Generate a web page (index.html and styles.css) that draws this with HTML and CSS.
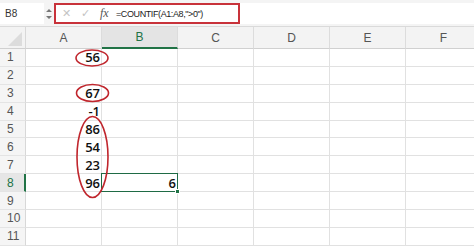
FILE: index.html
```html
<!DOCTYPE html>
<html lang="en">
<head>
  <meta charset="UTF-8" />
  <title>COUNTIF</title>
  <link rel="stylesheet" href="styles.css">
</head>
<body>
  <div class="app">
    <div class="formula-bar">
      <div class="name-box">B8</div>
      <div class="spinner">
        <svg width="6" height="12" viewBox="0 0 6 12"><path d="M0 4 L3 1 L6 4 Z M0 8 L3 11 L6 8 Z" fill="#777"/></svg>
      </div>
      <div class="formula-field">
        <div class="highlight">
          <span class="fx-btn cancel">&#x2715;</span>
          <span class="fx-btn ok">&#x2713;</span>
          <span class="fx">fx</span>
          <span class="formula">=COUNTIF(A1:A8,"&gt;0")</span>
        </div>
      </div>
    </div>

    <div class="sheet">
      <div class="corner"><svg width="26" height="22" viewBox="0 0 26 22"><path d="M22 5 L22 19 L8 19 Z" fill="#dcdcdc"/></svg></div>
      <div class="col-head">A</div>
      <div class="col-head active">B</div>
      <div class="col-head">C</div>
      <div class="col-head">D</div>
      <div class="col-head">E</div>
      <div class="col-head">F</div>

      <div class="row-head">1</div><div class="cell num">56</div><div class="cell"></div><div class="cell"></div><div class="cell"></div><div class="cell"></div><div class="cell"></div>
      <div class="row-head">2</div><div class="cell"></div><div class="cell"></div><div class="cell"></div><div class="cell"></div><div class="cell"></div><div class="cell"></div>
      <div class="row-head">3</div><div class="cell num">67</div><div class="cell"></div><div class="cell"></div><div class="cell"></div><div class="cell"></div><div class="cell"></div>
      <div class="row-head">4</div><div class="cell num">-1</div><div class="cell"></div><div class="cell"></div><div class="cell"></div><div class="cell"></div><div class="cell"></div>
      <div class="row-head">5</div><div class="cell num">86</div><div class="cell"></div><div class="cell"></div><div class="cell"></div><div class="cell"></div><div class="cell"></div>
      <div class="row-head">6</div><div class="cell num">54</div><div class="cell"></div><div class="cell"></div><div class="cell"></div><div class="cell"></div><div class="cell"></div>
      <div class="row-head">7</div><div class="cell num">23</div><div class="cell"></div><div class="cell"></div><div class="cell"></div><div class="cell"></div><div class="cell"></div>
      <div class="row-head active">8</div><div class="cell num">96</div><div class="cell num selected">6<span class="handle"></span></div><div class="cell"></div><div class="cell"></div><div class="cell"></div><div class="cell"></div>
      <div class="row-head">9</div><div class="cell"></div><div class="cell"></div><div class="cell"></div><div class="cell"></div><div class="cell"></div><div class="cell"></div>
      <div class="row-head">10</div><div class="cell"></div><div class="cell"></div><div class="cell"></div><div class="cell"></div><div class="cell"></div><div class="cell"></div>
      <div class="row-head">11</div><div class="cell"></div><div class="cell"></div><div class="cell"></div><div class="cell"></div><div class="cell"></div><div class="cell"></div>

      <!-- красные пометки поверх таблицы -->
      <svg class="marks" width="474" height="226" viewBox="0 0 474 226">
        <ellipse cx="92" cy="9" rx="16" ry="8" />
        <ellipse cx="92.5" cy="44" rx="16" ry="8.5" />
        <ellipse cx="92.5" cy="108" rx="15.5" ry="40.5" />
      </svg>
    </div>
  </div>
</body>
</html>
```

FILE: styles.css
```css
* {
  box-sizing: border-box;
}
body {
  margin: 0;
  background: #fff;
  font-family: "Liberation Sans", Arial, sans-serif;
  color: #222;
}
.app {
  width: 474px;
  height: 248px;
  overflow: hidden;
}
.formula-bar {
  display: flex;
  align-items: center;
  height: 27px;
  background: #f4f4f4;
  padding: 3px 0 2px 0;
  border-bottom: 1px solid #dadada;
}
.name-box {
  width: 44px;
  height: 100%;
  background: #fff;
  font-size: 10px;
  padding: 5px 0 0 5px;
  color: #333;
}
.spinner {
  width: 9px;
  display: flex;
  justify-content: center;
}
.formula-field {
  flex: 1;
  height: 100%;
  margin-left: 1px;
  background: #fff;
}
.highlight {
  width: 186px;
  height: 21px;
  border: 2px solid #c8323a;
  display: flex;
  align-items: center;
  padding-left: 6px;
  font-size: 10px;
}
.fx-btn {
  color: #c4c4c4;
  font-size: 11px;
  width: 19px;
}
.fx {
  font-family: "Liberation Serif", serif;
  font-style: italic;
  font-size: 12px;
  color: #555;
  width: 16px;
}
.formula {
  color: #222;
  font-size: 9px;
  letter-spacing: -0.4px;
}
.sheet {
  position: relative;
  display: grid;
  grid-template-columns: 26px repeat(6, 76px);
  grid-template-rows: 22px repeat(11, 17.9px);
}
.corner {
  background: #f3f3f3;
  border-right: 1px solid #d8d8d8;
  border-bottom: 1px solid #d0d0d0;
}
.col-head {
  background: #f3f3f3;
  border-right: 1px solid #dcdcdc;
  border-bottom: 1px solid #d0d0d0;
  display: flex;
  align-items: center;
  justify-content: center;
  font-size: 12px;
  color: #555;
}
.col-head.active {
  background: #e4e4e4;
  color: #217346;
  border-bottom: 2px solid #217346;
}
.row-head {
  background: #f5f5f5;
  border-right: 1px solid #d8d8d8;
  border-bottom: 1px solid #e4e4e4;
  display: flex;
  align-items: center;
  padding-left: 7px;
  font-size: 12px;
  color: #555;
}
.row-head.active {
  color: #217346;
  background: #e6e6e6;
  border-right: 2px solid #217346;
}
.cell {
  border-right: 1px solid #e1e1e1;
  border-bottom: 1px solid #e1e1e1;
  font-family: "Open Sans", sans-serif;
  font-size: 13px;
  font-weight: 600;
  display: flex;
  align-items: center;
  justify-content: flex-end;
  padding-right: 1px;
  color: #111;
}
.cell.selected {
  position: relative;
  border: 1px solid #1f6b45;
  margin: -1px 0 0 -1px;
}
.handle {
  position: absolute;
  right: -3px;
  bottom: -3px;
  width: 5px;
  height: 5px;
  background: #217346;
  border: 1px solid #fff;
}
.marks {
  position: absolute;
  left: 0;
  top: 22px;
  pointer-events: none;
}
.marks ellipse {
  fill: none;
  stroke: #c0262d;
  stroke-width: 1.6;
}
```
